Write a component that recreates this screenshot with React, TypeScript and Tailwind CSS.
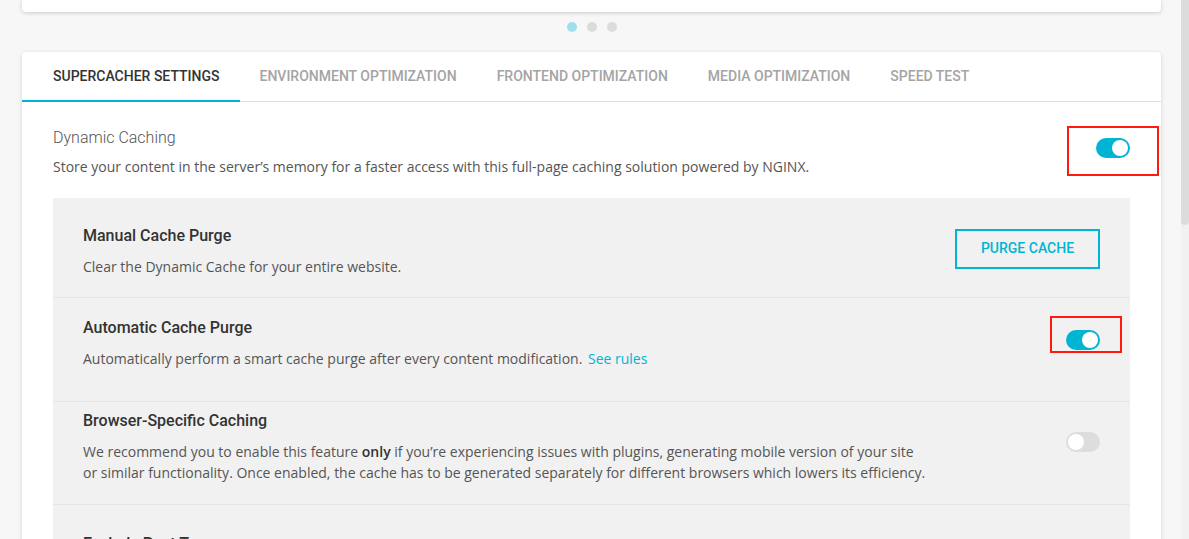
import { useState } from 'react';

const tabs = [
  'SUPERCACHER SETTINGS',
  'ENVIRONMENT OPTIMIZATION',
  'FRONTEND OPTIMIZATION',
  'MEDIA OPTIMIZATION',
  'SPEED TEST',
];

function Toggle({ on, onChange }: { on: boolean; onChange: () => void }) {
  return (
    <button
      type="button"
      onClick={onChange}
      className={`relative h-[20px] w-[34px] shrink-0 rounded-full ${on ? 'bg-[#00b5d4]' : 'bg-[#dddddd]'}`}
    >
      <span
        className={`absolute top-[2px] h-[16px] w-[16px] rounded-full bg-white ${on ? 'left-[16px]' : 'left-[2px]'}`}
      />
    </button>
  );
}

// red annotation frame from the screenshot
function Marked({ children, box }: { children: React.ReactNode; box: string }) {
  return (
    <div className="relative">
      {children}
      <div className={`pointer-events-none absolute border-2 border-[#ff1a0d] ${box}`} />
    </div>
  );
}

export default function App() {
  const [active, setActive] = useState(0);
  const [dynamic, setDynamic] = useState(true);
  const [auto, setAuto] = useState(true);
  const [browser, setBrowser] = useState(false);

  return (
    <div className="flex h-[539px] overflow-hidden bg-[#f7f7f7]" style={{ fontFamily: 'Roboto, sans-serif' }}>
      <main className="flex-1 pl-[22px] pr-[20px]">
        <div className="h-[12px] rounded-b-sm bg-white shadow-[0_1px_4px_rgba(0,0,0,0.18)]" />

        <div className="mt-[10px] mb-[20px] flex justify-center gap-[10px] pl-[1px]">
          <span className="h-[10px] w-[10px] rounded-full bg-[#9fe0ec]" />
          <span className="h-[10px] w-[10px] rounded-full bg-[#dcdcdc]" />
          <span className="h-[10px] w-[10px] rounded-full bg-[#dcdcdc]" />
        </div>

        <section className="rounded-sm bg-white shadow-[0_1px_4px_rgba(0,0,0,0.15)]">
          <nav className="flex h-[50px] border-b border-[#dddddd]">
            {tabs.map((t, i) => (
              <button
                key={t}
                onClick={() => setActive(i)}
                className={`relative pr-[20px] pl-[20px] text-[14px] font-medium first:pl-[31px] ${
                  i === active ? 'text-[#333333]' : 'text-[#a4a4a4]'
                }`}
              >
                {t}
                {i === active && <span className="absolute right-0 -bottom-px left-0 h-[2px] bg-[#00b5d4]" />}
              </button>
            ))}
          </nav>

          <div className="px-[31px]">
            <div className="flex items-center justify-between pt-[24px] pb-[21px]">
              <div>
                <h2 className="text-[16px] leading-[24px] font-light text-[#555555]">Dynamic Caching</h2>
                <p className="mt-[6px] text-[14px] leading-[21px] text-[#555555]" style={{ fontFamily: '"Open Sans", sans-serif' }}>
                  Store your content in the server’s memory for a faster access with this full-page caching solution powered by NGINX.
                </p>
              </div>
              <Marked box="-top-[12px] -left-[29px] h-[50px] w-[92px]">
                <Toggle on={dynamic} onChange={() => setDynamic(!dynamic)} />
              </Marked>
            </div>

            <div className="bg-[#f1f1f1]" style={{ fontFamily: '"Open Sans", sans-serif' }}>
              <div className="flex items-center justify-between border-b border-[#e6e6e6] px-[30px] pt-[26px] pb-[20px]">
                <div>
                  <h3 className="text-[16px] leading-[24px] font-medium text-[#333333]" style={{ fontFamily: 'Roboto, sans-serif' }}>
                    Manual Cache Purge
                  </h3>
                  <p className="mt-[8px] text-[14px] leading-[21px] text-[#555555]">Clear the Dynamic Cache for your entire website.</p>
                </div>
                <button
                  className="-mt-[4px] h-[40px] w-[145px] border-2 border-[#00b5d4] text-[14px] font-medium text-[#00b5d4]"
                  style={{ fontFamily: 'Roboto, sans-serif' }}
                >
                  PURGE CACHE
                </button>
              </div>

              <div className="flex items-center justify-between border-b border-[#e6e6e6] px-[30px] pt-[18px] pb-[32px]">
                <div>
                  <h3 className="text-[16px] leading-[24px] font-medium text-[#333333]" style={{ fontFamily: 'Roboto, sans-serif' }}>
                    Automatic Cache Purge
                  </h3>
                  <p className="mt-[8px] text-[14px] leading-[21px] text-[#555555]">
                    Automatically perform a smart cache purge after every content modification.{' '}
                    <a className="ml-[2px] text-[#00b5d4]">See rules</a>
                  </p>
                </div>
                <Marked box="-top-[14px] -left-[16px] h-[37px] w-[72px]">
                  <Toggle on={auto} onChange={() => setAuto(!auto)} />
                </Marked>
              </div>

              <div className="flex items-center justify-between border-b border-[#e6e6e6] px-[30px] pt-[7px] pb-[21px]">
                <div>
                  <h3 className="text-[16px] leading-[24px] font-medium text-[#333333]" style={{ fontFamily: 'Roboto, sans-serif' }}>
                    Browser-Specific Caching
                  </h3>
                  <p className="mt-[8px] text-[14px] leading-[21px] text-[#555555]">
                    We recommend you to enable this feature <b className="font-semibold text-[#333333]">only</b> if you’re experiencing issues with plugins, generating mobile version of your site
                    <br />
                    or similar functionality. Once enabled, the cache has to be generated separately for different browsers which lowers its efficiency.
                  </p>
                </div>
                <div className="-mt-[3px]">
                  <Toggle on={browser} onChange={() => setBrowser(!browser)} />
                </div>
              </div>

              <div className="px-[30px] pt-[27px] pb-[26px]">
                <h3 className="text-[16px] leading-[24px] font-medium text-[#333333]" style={{ fontFamily: 'Roboto, sans-serif' }}>
                  Exclude Post Types
                </h3>
              </div>
            </div>
          </div>
        </section>
      </main>

      <div className="w-[8px] bg-[#f1f1f1]">
        <div className="h-[225px] rounded-b bg-[#dcdcdc]" />
      </div>
    </div>
  );
}
